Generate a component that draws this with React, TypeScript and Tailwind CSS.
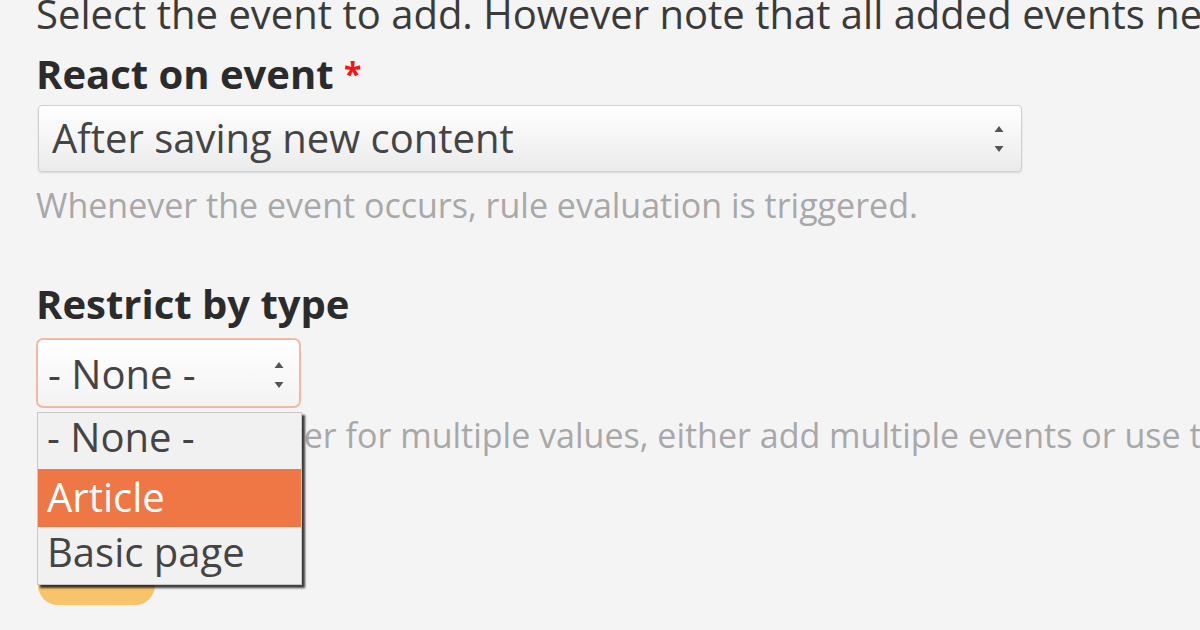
import React from "react";

const Arrows: React.FC<{ className?: string }> = ({ className }) => (
  <svg width="12" height="30" viewBox="0 0 12 30" className={className}>
    <path d="M1.5 8 L6 2 L10.5 8 Z" fill="#555" />
    <path d="M1.5 22 L6 28 L10.5 22 Z" fill="#555" />
  </svg>
);

const options = [
  { label: "- None -", cls: "h-[56px] pt-0 text-[#444]" },
  { label: "Article", cls: "h-[58px] pt-[4px] bg-[#ef7645] text-white" },
  { label: "Basic page", cls: "h-[57px] pt-[1px] text-[#444]" },
];

export default function App() {
  return (
    <div className="w-[1200px] h-[630px] overflow-hidden bg-[#f4f4f4] font-['Open_Sans',sans-serif] text-[#333]">
      <div className="pl-[36px] -mt-[10px]">
        <p className="text-[40px] leading-[48px] whitespace-nowrap text-[#3a3a3a]">
          Select the event to add. However note that all added events need to provide all required variables.
        </p>

        <label className="block mt-[12px] text-[40px] leading-[48px] font-bold text-[#2b2b2b]">
          React on event <span className="text-[#ff1010] text-[32px] align-top">*</span>
        </label>

        <div className="mt-[7px] ml-[2px] w-[984px] h-[67px] flex items-start justify-between rounded-[4px] border border-[#cfcfcf] bg-gradient-to-b from-white to-[#ebebeb] shadow-[0_1px_2px_rgba(0,0,0,0.12)] pl-[13px] pr-[16px]">
          <span className="pt-[8px] text-[40px] leading-[48px] text-[#444]">After saving new content</span>
          <Arrows className="mt-[18px]" />
        </div>

        <p className="mt-[13px] text-[34px] leading-[40px] text-[#a8a8a8] whitespace-nowrap">
          Whenever the event occurs, rule evaluation is triggered.
        </p>

        <label className="block mt-[55px] text-[40px] leading-[48px] font-bold text-[#2b2b2b]">
          Restrict by type
        </label>

        <div className="relative mt-[10px]">
          <div className="w-[265px] h-[70px] flex items-start justify-between rounded-[7px] border-2 border-[#f2b8a2] bg-gradient-to-b from-white to-[#f3f3f3] pl-[10px] pr-[14px]">
            <span className="pt-[10px] text-[40px] leading-[48px] text-[#444]">- None -</span>
            <Arrows className="mt-[20px]" />
          </div>

          <ul className="absolute left-[1px] top-[74px] z-10 w-[265px] bg-[#f1f1f1] border border-[#c8c8c8] shadow-[3px_3px_2px_rgba(0,0,0,0.75)]">
            {options.map((o) => (
              <li key={o.label} className={"pl-[9px] text-[40px] leading-[48px] whitespace-nowrap " + o.cls}>
                {o.label}
              </li>
            ))}
          </ul>

          <p className="mt-[7px] text-[34px] leading-[40px] text-[#a8a8a8] whitespace-nowrap">
            If you need to filter for multiple values, either add multiple events or use the "Entity is of bundle" condition instead.
          </p>

          <button className="mt-[100px] ml-[2px] w-[117px] h-[50px] rounded-[20px] bg-[#f8c46a]" />
        </div>
      </div>
    </div>
  );
}
